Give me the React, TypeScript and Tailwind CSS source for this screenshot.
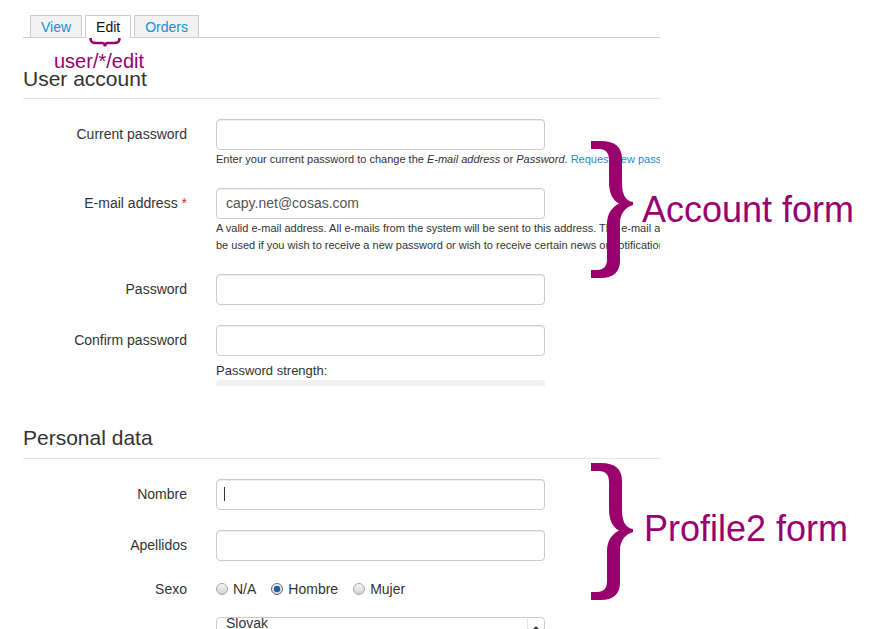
import React from "react";

const PURPLE = "#99006e";

function bracePath(t: number, h = 137) {
  return `M0,0 L10,0 C24,0 31,6 31,18 L31,${t - 20} C31,${t - 8} 35,${t - 2} 42,${t - 1} L42,${t + 2} C35,${t + 4} 29,${t + 10} 29,${t + 20} L29,${h - 17} C29,${h - 6} 22,${h} 10,${h} L0,${h} L0,${h - 8} L6,${h - 8} C13,${h - 8} 16,${h - 12} 16,${h - 19} L16,${t + 21} C16,${t + 11} 21,${t + 4} 28,${t + 0.5} C21,${t - 3} 18,${t - 11} 18,${t - 21} L18,19 C18,12 15,8 8,8 L0,8 Z`;
}

function Brace({ tip }: { tip: number }) {
  return (
    <svg width="43" height="137" viewBox="0 0 43 137">
      <path d={bracePath(tip)} fill={PURPLE} />
    </svg>
  );
}

function Input({ value, cursor }: { value?: string; cursor?: boolean }) {
  return (
    <div className="relative h-[31px] w-[329px] rounded-[4px] border border-[#cccccc] bg-white shadow-[inset_0_1px_1px_rgba(0,0,0,0.075)] pl-[9px] text-[14px] leading-[29px] text-[#555]">
      {value}
      {cursor && <div className="absolute left-[7px] top-[7px] h-[14px] w-[1px] bg-[#333]" />}
    </div>
  );
}

function Row({
  label,
  required,
  children,
  className = "",
}: {
  label: string;
  required?: boolean;
  children: React.ReactNode;
  className?: string;
}) {
  return (
    <div className={"flex " + className}>
      <div className="w-[164px] shrink-0 text-right text-[14px] leading-[31px] text-[#333]">
        {label}
        {required && <span className="text-[#e0271c]"> *</span>}
      </div>
      <div className="ml-[29px] min-w-0 flex-1">{children}</div>
    </div>
  );
}

function Radio({ checked }: { checked?: boolean }) {
  if (checked)
    return (
      <div className="flex h-[12px] w-[12px] items-center justify-center rounded-full border border-[#4d6d8e] bg-linear-to-b from-[#fafafa] to-[#d8d8d8]">
        <div className="h-[6px] w-[6px] rounded-full bg-[#1f609c] shadow-[0_0_1px_#0b3b66]" />
      </div>
    );
  return <div className="h-[12px] w-[12px] rounded-full border border-[#a6a6a6] bg-linear-to-b from-[#f6f6f6] to-[#d2d2d2]" />;
}

function Tab({ label, active }: { label: string; active?: boolean }) {
  if (active)
    return (
      <div className="mb-[-1px] h-[23px] border border-b-0 border-[#cccccc] bg-white px-[10px] text-[14px] leading-[22px] text-[#111]">
        {label}
      </div>
    );
  return (
    <div className="h-[22px] border border-b-0 border-[#cccccc] bg-[#f2f2f2] px-[10px] text-[14px] leading-[22px] text-[#168fd8]">
      {label}
    </div>
  );
}

export default function App() {
  return (
    <div className="relative h-[629px] w-[873px] overflow-hidden bg-white font-['Liberation_Sans',Arial,sans-serif] text-[#333]">
      <div className="ml-[23px] w-[637px] overflow-hidden">
        {/* Tabs */}
        <div className="flex items-end gap-[3px] border-b border-[#cccccc] pl-[7px] pt-[15px]">
          <Tab label="View" />
          <Tab label="Edit" active />
          <Tab label="Orders" />
        </div>

        {/* User account */}
        <h2 className="mt-[29px] border-b border-[#e5e5e5] pb-[7px] text-[21px] font-normal leading-[24px] text-[#333]">
          User account
        </h2>

        <Row label="Current password" className="mt-[20px]">
          <Input />
          <div className="mt-[1px] whitespace-nowrap text-[11px] leading-[17px] text-[#333]">
            Enter your current password to change the <em>E-mail address</em> or <em>Password</em>.{" "}
            <span className="text-[#168fd8]">Request new password.</span>
          </div>
        </Row>

        <Row label="E-mail address" required className="mt-[20px]">
          <Input value="capy.net@cosas.com" />
          <div className="mt-[1px] whitespace-nowrap text-[11px] leading-[17px] text-[#333]">
            A valid e-mail address. All e-mails from the system will be sent to this address. The e-mail address is not made public and will only
          </div>
          <div className="whitespace-nowrap text-[11px] leading-[17px] text-[#333]">
            be used if you wish to receive a new password or wish to receive certain news or notifications by e-mail.
          </div>
        </Row>

        <Row label="Password" className="mt-[20px]">
          <Input />
        </Row>

        <Row label="Confirm password" className="mt-[20px]">
          <Input />
          <div className="mt-[6px] text-[13px] leading-[18px] text-[#333]">Password strength:</div>
          <div className="h-[6px] w-[329px] rounded-t-[4px] bg-[#f0f0f0]" />
        </Row>

        {/* Personal data */}
        <h2 className="mt-[40px] border-b border-[#e5e5e5] pb-[8px] text-[21px] font-normal leading-[24px] text-[#333]">
          Personal data
        </h2>

        <Row label="Nombre" className="mt-[20px]">
          <Input cursor />
        </Row>

        <Row label="Apellidos" className="mt-[20px]">
          <Input />
        </Row>

        <div className="mt-[18px] flex">
          <div className="w-[164px] shrink-0 text-right text-[14px] leading-[20px] text-[#333]">Sexo</div>
          <div className="ml-[29px] flex items-center text-[14px] leading-[20px] text-[#333]">
            <Radio />
            <span className="ml-[5px]">N/A</span>
            <span className="ml-[15px]">
              <Radio checked />
            </span>
            <span className="ml-[5px]">Hombre</span>
            <span className="ml-[15px]">
              <Radio />
            </span>
            <span className="ml-[5px]">Mujer</span>
          </div>
        </div>

        <div className="mt-[18px] flex">
          <div className="w-[164px] shrink-0" />
          <div className="ml-[29px] flex h-[30px] w-[329px] overflow-hidden rounded-t-[4px] border border-[#cccccc]">
            <div className="flex-1 overflow-hidden pl-[9px]">
              <div className="mt-[-2px] text-[14px] leading-[14px] text-[#333]">Slovak</div>
            </div>
            <div className="flex w-[17px] justify-center border-l border-[#e5e5e5]">
              <div className="mt-[8px] h-0 w-0 border-x-[3px] border-b-[3px] border-x-transparent border-b-[#444]" />
            </div>
          </div>
        </div>
      </div>

      {/* Annotations */}
      <svg className="absolute left-[89px] top-[38px]" width="32" height="10" viewBox="0 0 32 10">
        <path
          d="M1.5,0 C1.5,4 3,5 7,5 L13,5 C15,5 16,6 16,8.5 C16,6 17,5 19,5 L25,5 C29,5 30.5,4 30.5,0"
          fill="none"
          stroke={PURPLE}
          strokeWidth="2.6"
        />
      </svg>
      <div className="absolute left-[54px] top-[51px] text-[20px] leading-[20px]" style={{ color: PURPLE }}>
        user/*/edit
      </div>

      <div className="absolute left-[591px] top-[141px]">
        <Brace tip={62} />
      </div>
      <div className="absolute left-[642px] top-[192px] text-[36px] leading-[36px]" style={{ color: PURPLE }}>
        Account form
      </div>

      <div className="absolute left-[591px] top-[463px]">
        <Brace tip={67} />
      </div>
      <div className="absolute left-[644px] top-[511px] text-[36px] leading-[36px]" style={{ color: PURPLE }}>
        Profile2 form
      </div>
    </div>
  );
}
